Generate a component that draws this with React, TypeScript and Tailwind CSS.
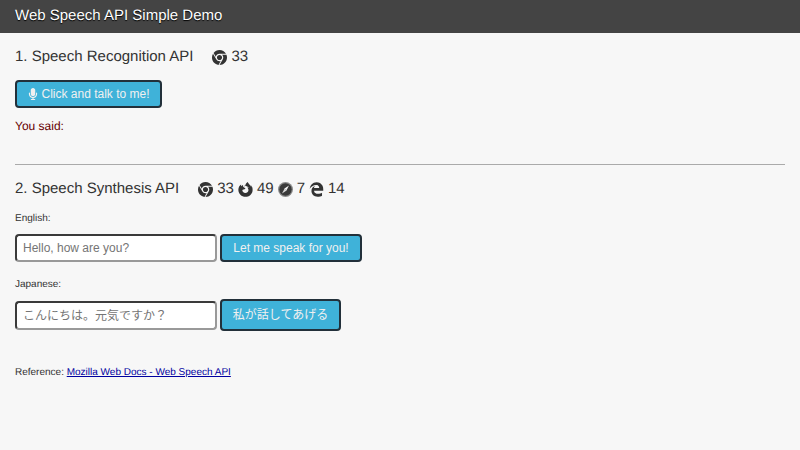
import { FaChrome, FaFirefoxBrowser, FaEdgeLegacy, FaMicrophone } from "react-icons/fa6";

const btn = "bg-[#3fb2d9] text-[#f0f0f0] rounded-[4px] border-2 border-[#22303a] text-[12px] shrink-0";
const input = "w-[202px] bg-white rounded-[4px] border-2 border-t-[#3a3a3a] border-l-[#3a3a3a] border-r-[#999] border-b-[#999] px-[6px] text-[12px] placeholder:text-[#757575] outline-none";
const icon = "text-[15px] text-[#333]";

function SafariIcon() {
  return (
    <svg width="15" height="15" viewBox="0 0 15 15" aria-hidden="true">
      <circle cx="7.5" cy="7.5" r="7.5" fill="#8a8a8a" />
      <circle cx="7.5" cy="7.5" r="6.2" fill="#3a3a3a" />
      <path d="M11 3.6 L8.4 8.6 L6.4 6.6 Z" fill="#f4f4f4" />
      <path d="M4 11.4 L6.6 6.4 L8.6 8.4 Z" fill="#d8d8d8" />
    </svg>
  );
}

function Stat({ icon, n }: { icon: React.ReactNode; n: string }) {
  return (
    <span className="flex items-center gap-[4px]">
      {icon}
      <span>{n}</span>
    </span>
  );
}

export default function App() {
  return (
    <div className="w-[800px] h-[450px] overflow-hidden bg-[#f7f7f7] text-[#333] font-['Liberation_Sans',sans-serif] [text-rendering:geometricPrecision]">
      <header className="h-[33px] bg-[#444] text-white text-[15px] px-[15px] flex items-center [text-shadow:0_1px_1px_#000]">
        Web Speech API Simple Demo
      </header>
      <main className="px-[15px]">
        <h2 className="mt-[15px] h-[18px] flex items-center text-[15px] leading-[18px] text-[#333]">
          <span>1. Speech Recognition API</span>
          <span className="ml-[19px]">
            <Stat icon={<FaChrome className={icon} />} n="33" />
          </span>
        </h2>
        <button className={`${btn} mt-[14px] h-[28px] w-[147px] flex items-center justify-center gap-[2px]`}>
          <FaMicrophone className="text-[12px]" />
          <span>Click and talk to me!</span>
        </button>
        <p className="mt-[10px] text-[12px] leading-[16px] text-[#660000]">You said:</p>
        <hr className="mt-[30px] border-t border-[#aaa]" />
        <h2 className="mt-[15px] h-[18px] flex items-center text-[15px] leading-[18px] text-[#333]">
          <span>2. Speech Synthesis API</span>
          <span className="ml-[19px] flex gap-[4px]">
            <Stat icon={<FaChrome className={icon} />} n="33" />
            <Stat icon={<FaFirefoxBrowser className={icon} />} n="49" />
            <Stat icon={<SafariIcon />} n="7" />
            <Stat icon={<FaEdgeLegacy className={icon} />} n="14" />
          </span>
        </h2>
        <p className="mt-[14px] text-[10px] leading-[13px]">English:</p>
        <div className="mt-[9px] flex items-center gap-[3px]">
          <input className={`${input} h-[28px]`} placeholder="Hello, how are you?" readOnly />
          <button className={`${btn} h-[28px] w-[142px]`}>Let me speak for you!</button>
        </div>
        <p className="mt-[16px] text-[10px] leading-[13px]">Japanese:</p>
        <div className="mt-[8px] flex items-end gap-[3px] font-['Liberation_Sans','Noto_Sans_CJK_JP',sans-serif]">
          <input className={`${input} h-[29px] mb-[1px]`} placeholder="こんにちは。元気ですか？" readOnly />
          <button className={`${btn} h-[32px] w-[121px]`}>私が話してあげる</button>
        </div>
        <p className="mt-[35px] text-[10px] leading-[13px]">
          Reference: <a className="underline text-[#0000a0]" href="#">Mozilla Web Docs - Web Speech API</a>
        </p>
      </main>
    </div>
  );
}
